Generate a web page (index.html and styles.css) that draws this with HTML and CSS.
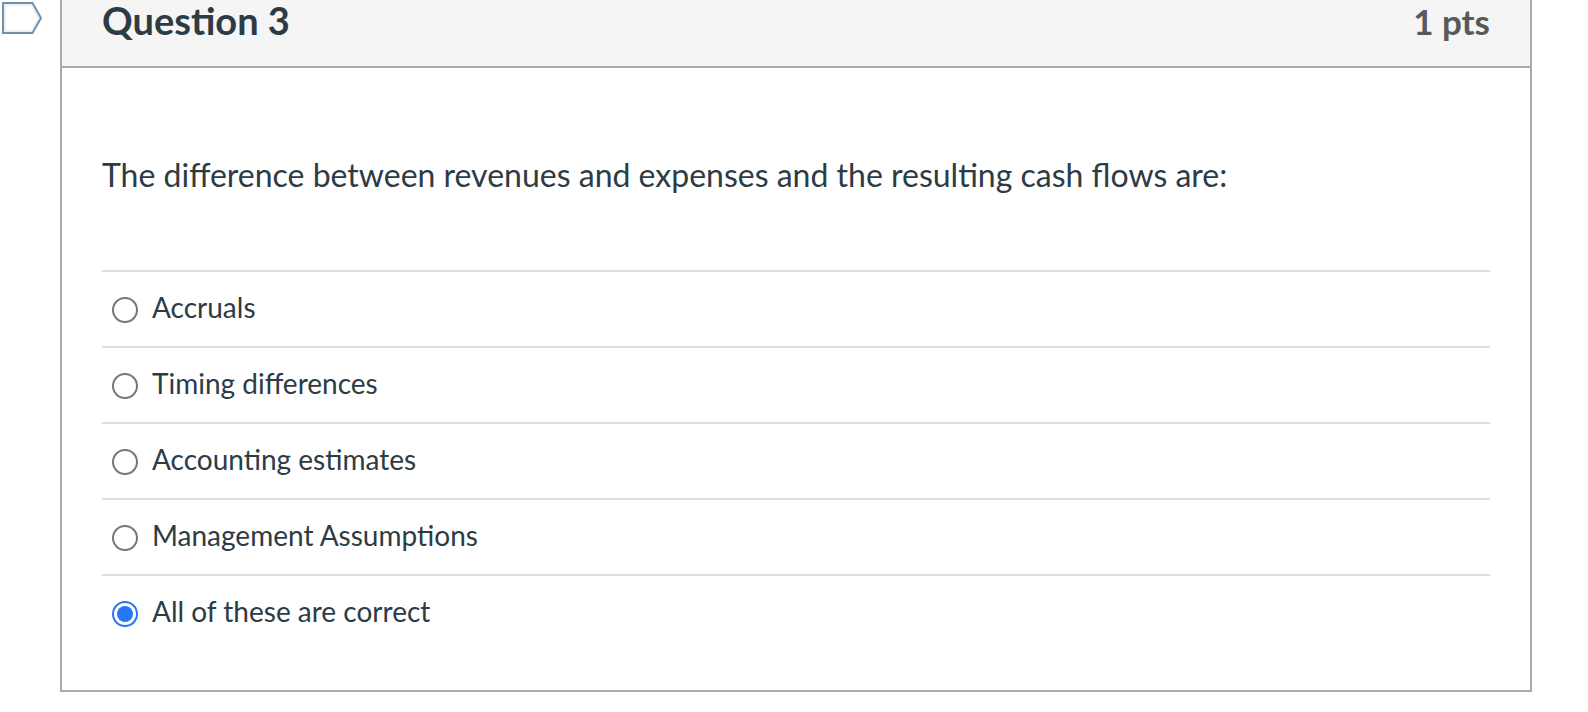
FILE: index.html
```html
<!DOCTYPE html>
<html lang="en">

<head>
    <meta charset="UTF-8">
    <meta name="viewport" content="width=device-width, initial-scale=1.0">
    <title>Question 3</title>
    <link rel="stylesheet" href="styles.css">
</head>

<body>
    <div class="question-row">
        <button class="flag-btn" type="button" aria-label="Flag question">
            <svg width="42" height="36" viewBox="0 0 42 36">
                <path d="M3 3H32.500L41 18L32.500 33H3Z" fill="#fff" stroke="#6f90aa" stroke-width="2" />
                <path d="M5 5H31.500L38.500 18L31.500 31H5Z" fill="none" stroke="#dbe3ea" stroke-width="1" />
            </svg>
        </button>

        <form class="question">
            <div class="header">
                <h2 class="name">Question 3</h2>
                <span class="points">1 pts</span>
            </div>

            <div class="text">
                <p id="question-text">The difference between revenues and expenses and the resulting cash flows are:</p>

                <div class="answers" role="radiogroup" aria-labelledby="question-text">
                    <div class="answer">
                        <input type="radio" name="answer" id="answer-1">
                        <label for="answer-1">Accruals</label>
                    </div>
                    <div class="answer">
                        <input type="radio" name="answer" id="answer-2">
                        <label for="answer-2">Timing differences</label>
                    </div>
                    <div class="answer">
                        <input type="radio" name="answer" id="answer-3">
                        <label for="answer-3">Accounting estimates</label>
                    </div>
                    <div class="answer">
                        <input type="radio" name="answer" id="answer-4">
                        <label for="answer-4">Management Assumptions</label>
                    </div>
                    <div class="answer">
                        <input type="radio" name="answer" id="answer-5" checked>
                        <label for="answer-5">All of these are correct</label>
                    </div>
                </div>
            </div>
        </form>
    </div>
</body>

</html>
```

FILE: styles.css
```css
* {
    margin: 0;
    padding: 0;
    box-sizing: border-box;
}

body {
    background-color: #FFF;
    color: #2D3B45;
    font-family: Lato, sans-serif;
}

.question-row {
    display: flex;
    align-items: flex-start;
    padding-right: 56px;
}

.flag-btn {
    flex: 0 0 60px;
    border: none;
    background: none;
    text-align: left;
    cursor: pointer;
}

.flag-btn svg {
    display: block;
}

.question {
    flex: 1;
    border: 2px solid #AAA;
    border-top: none;
}

.header {
    display: flex;
    justify-content: space-between;
    align-items: baseline;
    padding: 0 40px 25px;
    line-height: 40px;
    background-color: #F5F5F5;
    border-bottom: 2px solid #AAA;
}

.name {
    font-size: 38px;
    font-weight: bold;
}

.points {
    font-size: 35px;
    font-weight: bold;
    color: #595959;
}

.text {
    padding: 83px 40px 40px;
}

.text p {
    margin-bottom: 71px;
    font-size: 32px;
    line-height: 48px;
}

.answer {
    display: flex;
    align-items: flex-start;
    padding: 15px 10px 19px;
    border-top: 2px solid #DDD;
}

.answer input {
    appearance: none;
    width: 26px;
    height: 26px;
    margin: 10px 14px 0 0;
    border: 2px solid #767676;
    border-radius: 50%;
    background-color: #FFF;
}

.answer input:checked {
    padding: 3px;
    border-color: #2776F6;
    background-color: #2776F6;
    background-clip: content-box;
}

.answer label {
    font-size: 28px;
    line-height: 40px;
}
```
